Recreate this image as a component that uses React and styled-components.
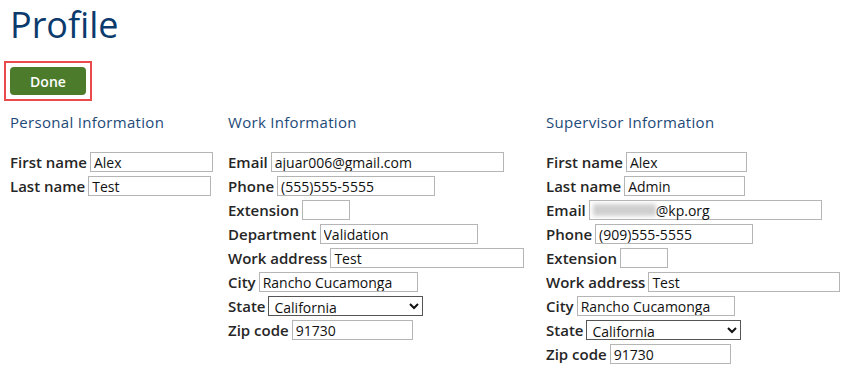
import styled, { createGlobalStyle } from "styled-components";

const GlobalStyle = createGlobalStyle`
  body {
    margin: 0;
    background: #ffffff;
    font-family: "Open Sans", "Liberation Sans", sans-serif;
  }
`;

const personal = [
  { label: "First name", value: "Alex", width: 123 },
  { label: "Last name", value: "Test", width: 123 },
];

const work = [
  { label: "Email", value: "ajuar006@gmail.com", width: 233 },
  { label: "Phone", value: "(555)555-5555", width: 158 },
  { label: "Extension", value: "", width: 48 },
  { label: "Department", value: "Validation", width: 158 },
  { label: "Work address", value: "Test", width: 194 },
  { label: "City", value: "Rancho Cucamonga", width: 159 },
  { label: "State", value: "California", select: true, width: 155 },
  { label: "Zip code", value: "91730", width: 121 },
];

const supervisor = [
  { label: "First name", value: "Alex", width: 121 },
  { label: "Last name", value: "Admin", width: 121 },
  { label: "Email", value: "@kp.org", hidden: true, width: 233 },
  { label: "Phone", value: "(909)555-5555", width: 158 },
  { label: "Extension", value: "", width: 48 },
  { label: "Work address", value: "Test", width: 192 },
  { label: "City", value: "Rancho Cucamonga", width: 158 },
  { label: "State", value: "California", select: true, width: 155 },
  { label: "Zip code", value: "91730", width: 121 },
];

const Section = ({ title, fields }) => (
  <Column>
    <Heading>{title}</Heading>
    <Fields>
      {fields.map((f) => (
        <Row key={f.label}>
          <Label>{f.label}</Label>
          {f.select ? (
            <Select $w={f.width} defaultValue={f.value}>
              <option>{f.value}</option>
            </Select>
          ) : f.hidden ? (
            <FakeInput $w={f.width}>
              <Blur />
              {f.value}
            </FakeInput>
          ) : (
            <Input $w={f.width} defaultValue={f.value} />
          )}
        </Row>
      ))}
    </Fields>
  </Column>
);

const App = () => {
  return (
    <Page>
      <GlobalStyle />
      <Title>Profile</Title>
      <Focus>
        <DoneButton>Done</DoneButton>
      </Focus>
      <Columns>
        <Section title="Personal Information" fields={personal} />
        <Section title="Work Information" fields={work} />
        <Section title="Supervisor Information" fields={supervisor} />
      </Columns>
    </Page>
  );
};

const Page = styled.div`
  padding: 0 10px;
  color: #222;
`;

const Title = styled.h1`
  margin: 0;
  font-size: 36px;
  line-height: 50px;
  font-weight: 400;
  color: #0b3a6d;
`;

const Focus = styled.div`
  display: inline-block;
  margin: 11px 0 0 -6px;
  padding: 4px;
  border: 2px solid #ea4a4c;
`;

const DoneButton = styled.button`
  display: block;
  width: 76px;
  height: 28px;
  border: none;
  border-radius: 4px;
  background: #4b7b2b;
  color: #ffffff;
  font-family: inherit;
  font-size: 14px;
  font-weight: 600;
  cursor: pointer;
`;

const Columns = styled.div`
  display: grid;
  grid-template-columns: 218px 318px 1fr;
  margin-top: 11px;
`;

const Column = styled.div`
  display: flex;
  flex-direction: column;
`;

const Heading = styled.h2`
  margin: 0;
  font-size: 15px;
  line-height: 20px;
  font-weight: 400;
  letter-spacing: 0.3px;
  color: #1d4a78;
`;

const Fields = styled.div`
  display: flex;
  flex-direction: column;
  gap: 4px;
  margin-top: 20px;
`;

const Row = styled.div`
  display: flex;
  align-items: center;
  gap: 3px;
  height: 20px;
`;

const Label = styled.span`
  font-size: 15px;
  font-weight: 600;
  color: #262626;
  white-space: nowrap;
`;

const fieldBox = `
  box-sizing: border-box;
  height: 20px;
  padding: 0 3px;
  font-family: "Open Sans", "Liberation Sans", sans-serif;
  font-size: 14px;
  color: #111;
  background: #fff;
`;

const Input = styled.input`
  ${fieldBox}
  width: ${(p) => p.$w}px;
  border: 1px solid #b5b5b5;
  outline: none;
`;

const FakeInput = styled.div`
  ${fieldBox}
  width: ${(p) => p.$w}px;
  border: 1px solid #b5b5b5;
  display: flex;
  align-items: center;
`;

const Blur = styled.span`
  display: inline-block;
  width: 63px;
  height: 12px;
  background: #cfcfcf;
  filter: blur(2px);
`;

const Select = styled.select`
  ${fieldBox}
  width: ${(p) => p.$w}px;
  padding: 0 1px;
  border: 1px solid #555;
  border-radius: 0;
`;

export default App;
